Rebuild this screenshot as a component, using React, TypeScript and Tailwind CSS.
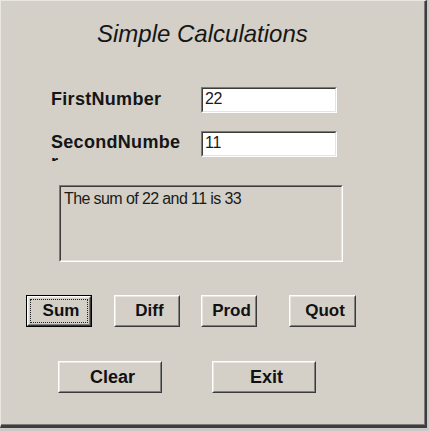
import React from "react";

const FONT = "font-['Liberation_Sans',Arial,sans-serif]";

function Sunken({
  className,
  innerClassName,
  children,
}: {
  className: string;
  innerClassName: string;
  children?: React.ReactNode;
}) {
  return (
    <div
      className={`border border-t-[#7c7a76] border-l-[#7c7a76] border-r-white border-b-white ${className}`}
    >
      <div
        className={`h-full w-full border border-t-[#3c3b39] border-l-[#3c3b39] border-r-[#e6e4df] border-b-[#e6e4df] ${innerClassName}`}
      >
        {children}
      </div>
    </div>
  );
}

function Btn({
  w,
  label,
  size,
  def,
}: {
  w: string;
  label: string;
  size: string;
  def?: boolean;
}) {
  const face = (
    <div className="h-full w-full border border-t-white border-l-white border-r-[#3a3a3a] border-b-[#3a3a3a]">
      <div className="flex h-full w-full border border-t-[#e8e6e1] border-l-[#e8e6e1] border-r-[#808080] border-b-[#808080]">
        {def ? (
          <div className="m-[1px] flex flex-1 items-center justify-center border border-dotted border-[#222] pl-[4px]">
            <span className={`${size} font-bold text-[#111]`}>{label}</span>
          </div>
        ) : (
          <div className="flex flex-1 items-center justify-center pl-[5px]">
            <span className={`${size} font-bold text-[#111]`}>{label}</span>
          </div>
        )}
      </div>
    </div>
  );
  return (
    <div className={`${w} h-[32px] bg-[#d4d0c8] ${def ? "border border-black" : ""}`}>
      {face}
    </div>
  );
}

export default function App() {
  return (
    <div className={`h-[431px] w-[429px] bg-[#cbc9c5] ${FONT}`}>
      <div className="h-[428px] w-[427px] border-l border-t border-b-[3px] border-r-[2px] border-l-[#e9e7e2] border-t-[#e9e7e2] border-r-[#3e3e3e] border-b-[#3e3e3e]">
        <div className="flex h-full w-full flex-col border-b border-r border-b-[#7a7a7a] border-r-[#7a7a7a] bg-[#d4d0c8]">
          <div className="pl-[96px] pt-[19px] text-[24px] italic leading-[28px] text-[#161616]">
            Simple Calculations
          </div>

          <div className="mt-[39px] flex h-[26px] items-start pl-[50px]">
            <div className="mt-[2px] h-[26px] w-[132px] overflow-hidden text-[18px] font-bold leading-[20px] tracking-[0.3px] text-[#151515]">
              FirstNumber
            </div>
            <Sunken className="ml-[18px] h-[26px] w-[136px]" innerClassName="bg-white pl-[2px]">
              <div className="text-[16px] leading-[20px] tracking-[-0.3px] text-[#1a1a1a]">22</div>
            </Sunken>
          </div>

          <div className="mt-[18px] flex h-[26px] items-start pl-[50px]">
            <div className="mt-[1px] h-[29px] w-[132px] shrink-0 overflow-hidden break-all text-[18px] font-bold leading-[20px] tracking-[0.3px] text-[#151515]">
              SecondNumber
            </div>
            <Sunken className="ml-[18px] h-[26px] w-[136px]" innerClassName="bg-white pl-[2px]">
              <div className="text-[16px] leading-[20px] tracking-[-0.3px] text-[#1a1a1a]">11</div>
            </Sunken>
          </div>

          <div className="ml-[58px] mt-[28px]">
            <Sunken className="h-[77px] w-[284px]" innerClassName="pl-[3px] pt-[3px]">
              <div className="text-[16px] leading-[18px] tracking-[-0.6px] text-[#1a1a1a]">
                The sum of 22 and 11 is 33
              </div>
            </Sunken>
          </div>

          <div className="mt-[33px] flex pl-[25px]">
            <Btn w="w-[66px]" label="Sum" size="text-[17px]" def />
            <div className="ml-[22px]">
              <Btn w="w-[66px]" label="Diff" size="text-[17px]" />
            </div>
            <div className="ml-[21px]">
              <Btn w="w-[56px]" label="Prod" size="text-[17px]" />
            </div>
            <div className="ml-[32px]">
              <Btn w="w-[67px]" label="Quot" size="text-[17px]" />
            </div>
          </div>

          <div className="mt-[34px] flex gap-[50px] pl-[57px]">
            <Btn w="w-[104px]" label="Clear" size="text-[18px]" />
            <Btn w="w-[104px]" label="Exit" size="text-[18px]" />
          </div>
        </div>
      </div>
    </div>
  );
}
